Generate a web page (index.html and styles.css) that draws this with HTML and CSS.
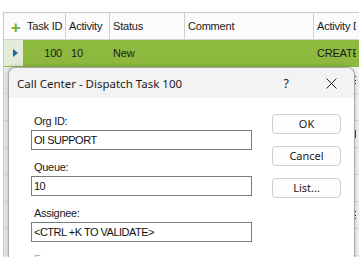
FILE: index.html
```html
<!DOCTYPE html>
<html>
<head>
<meta charset="utf-8">
<link rel="stylesheet" href="styles.css">
</head>
<body>
<div class="grid">
  <div class="row head">
    <div class="cell ind"><span class="plus">+</span></div>
    <div class="cell c1 sep">Task ID</div>
    <div class="cell c2 sep">Activity</div>
    <div class="cell c3 sep">Status</div>
    <div class="cell c4 sep">Comment</div>
    <div class="cell c5">Activity D</div>
  </div>
  <div class="row sel">
    <div class="cell ind"><span class="tri"></span></div>
    <div class="cell c1 num">100</div>
    <div class="cell c2 pad">10</div>
    <div class="cell c3">New</div>
    <div class="cell c4"></div>
    <div class="cell c5">CREATE</div>
  </div>
  <div class="row"><div class="cell ind"></div><div class="cell c1"></div><div class="cell c2"></div><div class="cell c3"></div><div class="cell c4"></div><div class="cell c5">CREATE</div></div>
  <div class="row"><div class="cell ind"></div><div class="cell c1"></div><div class="cell c2"></div><div class="cell c3"></div><div class="cell c4"></div><div class="cell c5">TIMES:</div></div>
  <div class="row"><div class="cell ind"></div><div class="cell c1"></div><div class="cell c2"></div><div class="cell c3"></div><div class="cell c4"></div><div class="cell c5">TRANRI</div></div>
  <div class="row"><div class="cell ind"></div><div class="cell c1"></div><div class="cell c2"></div><div class="cell c3"></div><div class="cell c4"></div><div class="cell c5 warn">WAIT T</div></div>
  <div class="row"><div class="cell ind"></div><div class="cell c1"></div><div class="cell c2"></div><div class="cell c3"></div><div class="cell c4"></div><div class="cell c5">ASSIC</div></div>
  <div class="row"><div class="cell ind"></div><div class="cell c1"></div><div class="cell c2"></div><div class="cell c3"></div><div class="cell c4"></div><div class="cell c5">CREATE</div></div>
  <div class="row"><div class="cell ind"></div><div class="cell c1"></div><div class="cell c2"></div><div class="cell c3"></div><div class="cell c4"></div><div class="cell c5">REASS</div></div>
</div>

<div class="dialog">
  <div class="titlebar">
    <span class="title">Call Center - Dispatch Task 100</span>
    <span class="help">?</span>
    <svg class="close" width="11" height="11" viewBox="0 0 11 11"><path d="M0.5 0.5 L10.5 10.5 M10.5 0.5 L0.5 10.5" stroke="#222" stroke-width="1" fill="none"/></svg>
  </div>
  <div class="body">
    <div class="form">
      <div class="field">
        <div class="label">Org ID:</div>
        <div class="input">OI SUPPORT</div>
      </div>
      <div class="field">
        <div class="label">Queue:</div>
        <div class="input">10</div>
      </div>
      <div class="field">
        <div class="label">Assignee:</div>
        <div class="input">&lt;CTRL +K TO VALIDATE&gt;</div>
      </div>
      <div class="field">
        <div class="label disabled">Focus:</div>
      </div>
    </div>
    <div class="buttons">
      <div class="btn">OK</div>
      <div class="btn">Cancel</div>
      <div class="btn">List...</div>
    </div>
  </div>
</div>
</body>
</html>
```
FILE: styles.css
```css
html, body {
  margin: 0;
  padding: 0;
}
body {
  width: 359px;
  height: 257px;
  overflow: hidden;
  position: relative;
  background: #ffffff;
  font-family: "Liberation Sans", Arial, sans-serif;
  font-size: 11px;
  color: #1a1a1a;
}
.grid {
  margin-top: 12px;
  margin-left: 3px;
  border-top: 1px solid #c9c9c9;
  border-left: 1px solid #c9c9c9;
  background: #f4f4f4;
  width: 356px;
  height: 245px;
  box-sizing: border-box;
  overflow: hidden;
}
.row {
  display: flex;
  height: 27px;
  box-sizing: border-box;
  border-bottom: 1px solid #dcdcdc;
}
.row.head {
  background: #fbfbfb;
  border-bottom: 1px solid #d4d4d4;
}
.cell {
  box-sizing: border-box;
  height: 100%;
  display: flex;
  align-items: center;
  white-space: nowrap;
  overflow: hidden;
  padding-left: 3px;
  letter-spacing: -0.2px;
  flex-shrink: 0;
}
.ind { width: 19px; padding-left: 0; justify-content: center; background: #ececec; }
.head .ind { background: #fbfbfb; }
.c1 { width: 43px; padding-left: 4px; }
.c2 { width: 44px; padding-left: 3px; }
.c3 { width: 75px; padding-left: 3px; }
.c4 { width: 129px; }
.c5 { width: 42px; padding-left: 3px; background: #fafafa; flex-shrink: 1; }
.head .c5 { background: transparent; }
.sep { border-right: 1px solid #cfcfcf; }
.plus {
  color: #74ad33;
  font-size: 17px;
  font-weight: bold;
  line-height: 1;
  margin-left: 4px;
  margin-top: 2px;
}
.sel { background: #8dba3e; border-bottom-color: #8dba3e; }
.sel .ind { background: #e4ebd9; }
.sel .c5 { background: transparent; }
.tri {
  width: 0;
  height: 0;
  border-top: 4px solid transparent;
  border-bottom: 4px solid transparent;
  border-left: 5px solid #1d6aa5;
  margin-left: 4px;
}
.num { justify-content: flex-end; padding-right: 4px; }
.pad { padding-left: 5px; }
.warn { color: #d49a1a; }

.dialog {
  position: absolute;
  left: 8px;
  top: 67px;
  width: 347px;
  height: 190px;
  box-sizing: border-box;
  border: 1px solid #a8a8a8;
  border-bottom: none;
  border-radius: 8px 8px 0 0;
  background: #ffffff;
  box-shadow: 0 0 5px rgba(0, 0, 0, 0.25);
  overflow: hidden;
}
.titlebar {
  height: 30px;
  background: #f3f3f3;
  display: flex;
  align-items: center;
  padding-left: 8px;
}
.title {
  font-family: "Noto Sans", "Open Sans", sans-serif;
  font-size: 11.5px;
  color: #1b1b1b;
  flex: 1;
}
.help {
  font-family: "Noto Sans", sans-serif;
  font-size: 12.5px;
  color: #222;
  margin-right: 37px;
}
.close { margin-right: 17px; }
.body {
  display: flex;
  padding: 16px 0 0 22px;
}
.form {
  width: 221px;
  display: flex;
  flex-direction: column;
  gap: 10px;
}
.label {
  height: 14px;
  line-height: 14px;
  margin-bottom: 2px;
  padding-left: 3px;
  letter-spacing: -0.3px;
  color: #1a1a1a;
}
.label.disabled { color: #a5a5a5; }
.input {
  height: 20px;
  box-sizing: border-box;
  border: 1px solid #7a7a7a;
  line-height: 18px;
  padding-left: 2px;
  letter-spacing: -0.5px;
  color: #111;
}
.buttons {
  margin-left: 20px;
  display: flex;
  flex-direction: column;
  gap: 12px;
}
.btn {
  width: 69px;
  height: 20px;
  box-sizing: border-box;
  border: 1px solid #d0d0d0;
  border-radius: 4px;
  background: #fdfdfd;
  font-family: "Noto Sans", "Open Sans", sans-serif;
  font-size: 11px;
  line-height: 18px;
  text-align: center;
  color: #1b1b1b;
}
```
